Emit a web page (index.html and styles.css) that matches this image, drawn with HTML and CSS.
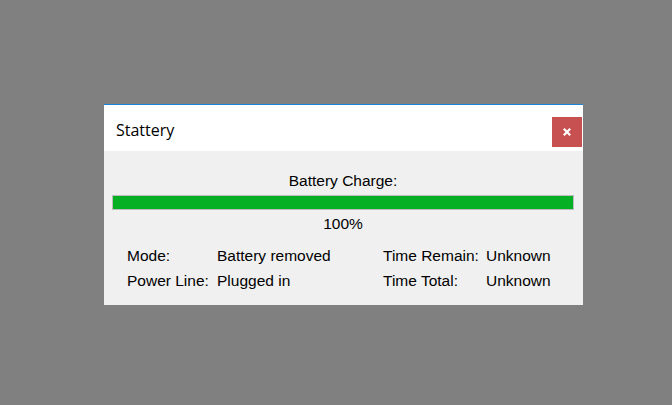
FILE: index.html
```html
<!DOCTYPE html>
<html lang="en">
<head>
    <meta charset="UTF-8">
    <meta name="viewport" content="width=device-width, initial-scale=1.0">
    <title>Stattery</title>
    <link rel="stylesheet" href="styles.css">
</head>
<body>
    <div class="window">
        <div class="titlebar">
            <span class="title">Stattery</span>
            <button class="close" aria-label="Close">
                <svg width="8" height="8" viewBox="0 0 8 8">
                    <path d="M0.8 0.8 L7.2 7.2 M7.2 0.8 L0.8 7.2" stroke="#fff" stroke-width="2.2" fill="none"/>
                </svg>
            </button>
        </div>
        <div class="content">
            <div class="charge-label">Battery Charge:</div>
            <div class="progress">
                <div class="progress-fill" style="width: 100%"></div>
            </div>
            <div class="percent">100%</div>
            <div class="details">
                <span>Mode:</span>
                <span>Battery removed</span>
                <span>Time Remain:</span>
                <span>Unknown</span>
                <span>Power Line:</span>
                <span>Plugged in</span>
                <span>Time Total:</span>
                <span>Unknown</span>
            </div>
        </div>
    </div>
</body>
</html>
```

FILE: styles.css
```css
html, body {
    background: #808080;
    margin: 0;
    padding: 0;
}

.window {
    width: 479px;
    margin: 104px 0 0 104px;
    border-top: 1px solid #1883d7;
    font-family: "Liberation Sans", Arial, sans-serif;
    color: #000;
}

.titlebar {
    height: 46px;
    background: #ffffff;
    display: flex;
    justify-content: space-between;
    align-items: flex-start;
}

.title {
    font-family: "Open Sans", "Noto Sans", sans-serif;
    font-size: 16px;
    line-height: 22px;
    margin: 14px 0 0 12px;
}

.close {
    width: 30px;
    height: 30px;
    margin: 12px 1px 0 0;
    padding: 0;
    border: none;
    background: #c75050;
    display: flex;
    align-items: center;
    justify-content: center;
}

.content {
    background: #f0f0f0;
    padding: 21px 9px 12px 8px;
    font-size: 15.5px;
}

.charge-label,
.percent {
    text-align: center;
    line-height: 18px;
}

.progress {
    height: 13px;
    margin: 5px 0;
    border: 1px solid #bcbcbc;
    background: #e6e6e6;
}

.progress-fill {
    height: 100%;
    background: #06b025;
}

.details {
    display: grid;
    grid-template-columns: 90px 166px 103px auto;
    line-height: 25px;
    margin: 10px 0 0 15px;
}
```
